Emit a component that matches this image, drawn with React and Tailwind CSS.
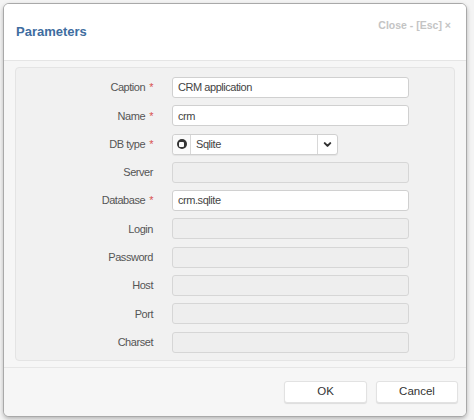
import { ChevronDown } from "lucide-react";

const fields = [
  { label: "Caption", required: true, value: "CRM application" },
  { label: "Name", required: true, value: "crm" },
  { label: "DB type", required: true, type: "lookup", value: "Sqlite" },
  { label: "Server", disabled: true },
  { label: "Database", required: true, value: "crm.sqlite" },
  { label: "Login", disabled: true },
  { label: "Password", disabled: true },
  { label: "Host", disabled: true },
  { label: "Port", disabled: true },
  { label: "Charset", disabled: true },
];

function Label({ text, required }) {
  return (
    <div className="w-[138px] shrink-0 text-right text-[11px] tracking-[-0.45px] text-[#555] pr-[1px]">
      {text}
      {required && <span className="text-[#d9534f] ml-[4px]">*</span>}
    </div>
  );
}

function Field({ field }) {
  if (field.type === "lookup") {
    return (
      <div className="flex h-[21px] w-[166px] rounded-[3px] border border-[#d0d0d0] bg-white shadow-[0_1px_1px_rgba(0,0,0,0.06)]">
        <div className="w-[18px] flex items-center justify-center border-r border-[#d8d8d8] bg-[#fafafa] rounded-l-[3px]">
          <div className="w-[10px] h-[10px] rounded-full bg-[#333] flex items-center justify-center">
            <div className="w-[5px] h-[5px] bg-[#fafafa] rounded-[1px]"></div>
          </div>
        </div>
        <div className="flex-1 flex items-center px-[5px] text-[11px] tracking-[-0.45px] text-[#444]">{field.value}</div>
        <div className="w-[20px] flex items-center justify-center border-l border-[#d8d8d8]">
          <ChevronDown className="w-[11px] h-[11px] text-[#333]" strokeWidth={4.5} />
        </div>
      </div>
    );
  }
  return (
    <div
      className={`flex items-center h-[21px] w-[237px] rounded-[3px] border px-[5px] text-[11px] tracking-[-0.45px] text-[#444] ${
        field.disabled ? "bg-[#eeeeee] border-[#d6d6d6]" : "bg-white border-[#d0d0d0]"
      }`}
    >
      {field.value}
    </div>
  );
}

export default function App() {
  return (
    <div className="w-[474px] h-[420px] bg-[#f4f4f4] p-[3px]" style={{ fontFamily: '"Liberation Sans", Arial, sans-serif' }}>
      <div className="h-[414px] w-[464px] flex flex-col rounded-[6px] border border-[#a9a9a9] bg-white overflow-hidden shadow-[0_2px_4px_rgba(0,0,0,0.25)]">
        {/* Header */}
        <div className="h-[57px] shrink-0 flex justify-between border-b border-[#e5e5e5] bg-white pl-[12px] pr-[15px]">
          <div className="pt-[18px] text-[13px] font-bold text-[#3e6da0]">Parameters</div>
          <div className="pt-[14px] text-[10.5px] font-bold text-[#c4c4c4]">Close - [Esc] ×</div>
        </div>

        {/* Body */}
        <div className="flex-1 bg-[#f6f6f6] px-[11px] pt-[6px] pb-[6px] border-b border-[#e6e6e6]">
          <div className="h-[294px] rounded-[4px] border border-[#e4e4e4] bg-[#f1f1f1] pt-[9px] flex flex-col gap-[7.3px]">
            {fields.map((f) => (
              <div key={f.label} className="flex items-center gap-[18px]">
                <Label text={f.label} required={f.required} />
                <Field field={f} />
              </div>
            ))}
          </div>
        </div>

        {/* Footer */}
        <div className="h-[48px] shrink-0 bg-[#f6f6f6] flex justify-end items-start gap-[9px] pt-[13px] pr-[8px]">
          <button className="w-[83px] h-[22px] rounded-[3px] bg-white border border-[#e2e2e2] shadow-[0_1px_1px_rgba(0,0,0,0.1)] text-[11.5px] text-[#333]">
            OK
          </button>
          <button className="w-[82px] h-[22px] rounded-[3px] bg-white border border-[#e2e2e2] shadow-[0_1px_1px_rgba(0,0,0,0.1)] text-[11.5px] text-[#333]">
            Cancel
          </button>
        </div>
      </div>
    </div>
  );
}
